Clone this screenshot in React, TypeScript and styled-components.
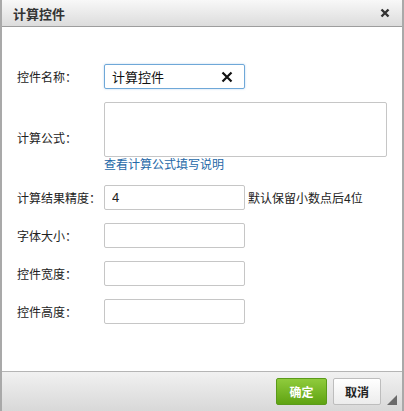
import styled, { createGlobalStyle } from "styled-components";

const GlobalStyle = createGlobalStyle`
  html, body {
    margin: 0;
    padding: 0;
    background: #ffffff;
  }
  body {
    font-family: "Liberation Sans", "Noto Sans CJK SC", sans-serif;
    font-size: 12px;
    color: #222;
  }
`;

const rows = [
  { label: "计算结果精度：", value: "4", hint: "默认保留小数点后4位" },
  { label: "字体大小：", value: "" },
  { label: "控件宽度：", value: "" },
  { label: "控件高度：", value: "" },
];

export default function App() {
  return (
    <>
      <GlobalStyle />
      <Dialog>
        <TitleBar>
          <Title>计算控件</Title>
          <CloseBtn aria-label="close">
            <svg width="10" height="10" viewBox="0 0 10 10">
              <path d="M1.5 1.5 L8.5 8.5 M8.5 1.5 L1.5 8.5" stroke="#333" strokeWidth="2.4" />
            </svg>
          </CloseBtn>
        </TitleBar>
        <Body>
          <Form>
            <Label>控件名称：</Label>
            <NameField>
              <NameText>计算控件</NameText>
              <ClearIcon width="12" height="12" viewBox="0 0 12 12">
                <path d="M1.5 1.5 L10.5 10.5 M10.5 1.5 L1.5 10.5" stroke="#111" strokeWidth="2.2" />
              </ClearIcon>
            </NameField>

            <Label>计算公式：</Label>
            <FormulaCell>
              <Formula />
              <HelpLink href="#">查看计算公式填写说明</HelpLink>
            </FormulaCell>

            {rows.map((r) => (
              <Row key={r.label}>
                <Label>{r.label}</Label>
                <InputCell>
                  <Input defaultValue={r.value} />
                  {r.hint && <Hint>{r.hint}</Hint>}
                </InputCell>
              </Row>
            ))}
          </Form>
        </Body>
        <Footer>
          <Button $primary>确定</Button>
          <Button>取消</Button>
          <Grip />
        </Footer>
      </Dialog>
    </>
  );
}

const Dialog = styled.div`
  position: relative;
  display: flex;
  flex-direction: column;
  height: 411px;
  box-sizing: border-box;
  border-left: 2px solid #a9a9a9;
  border-right: 2px solid #a9a9a9;
  background: #fff;
`;

const TitleBar = styled.div`
  display: flex;
  align-items: center;
  justify-content: space-between;
  height: 26px;
  padding: 0 12px 0 11px;
  background: linear-gradient(#f8f8f8, #dcdcdc);
  border-bottom: 1px solid #9d9d9d;
`;

const Title = styled.span`
  font-size: 13px;
  font-weight: bold;
  color: #333;
`;

const CloseBtn = styled.span`
  display: flex;
  align-items: center;
`;

const Body = styled.div`
  flex: 1;
  padding: 37px 0 0 15px;
`;

const Form = styled.div`
  display: grid;
  grid-template-columns: 87px auto;
  row-gap: 13px;
  align-items: center;
`;

const Row = styled.div`
  display: contents;
`;

const Label = styled.span`
  font-size: 12px;
  color: #222;
`;

const NameField = styled.div`
  display: flex;
  align-items: center;
  justify-content: space-between;
  box-sizing: border-box;
  width: 141px;
  height: 25px;
  padding: 0 11px 0 7px;
  border: 1px solid #6fa8d8;
  border-radius: 2px;
  box-shadow: 0 0 2px rgba(100, 160, 220, 0.5);
`;

const NameText = styled.span`
  font-size: 13px;
  color: #111;
`;

const ClearIcon = styled.svg`
  display: block;
`;

const FormulaCell = styled.div`
  display: flex;
  flex-direction: column;
  align-items: flex-start;
`;

const Formula = styled.textarea`
  box-sizing: border-box;
  width: 283px;
  height: 55px;
  margin: 0;
  border: 1px solid #c6c6c6;
  border-radius: 2px;
  resize: none;
  font: inherit;
`;

const HelpLink = styled.a`
  margin-top: 1px;
  line-height: 14px;
  font-size: 12px;
  color: #2468a8;
  text-decoration: none;
`;

const InputCell = styled.div`
  display: flex;
  align-items: center;
  gap: 3px;
`;

const Input = styled.input`
  box-sizing: border-box;
  width: 141px;
  height: 25px;
  margin: 0;
  padding: 0 7px;
  border: 1px solid #c6c6c6;
  border-radius: 2px;
  font-family: "Liberation Sans", "Noto Sans CJK SC", sans-serif;
  font-size: 13px;
  color: #222;
  outline: none;
`;

const Hint = styled.span`
  font-size: 12px;
  color: #222;
`;

const Footer = styled.div`
  position: relative;
  display: flex;
  align-items: center;
  justify-content: flex-end;
  gap: 6px;
  height: 39px;
  padding-right: 21px;
  border-top: 1px solid #b5b5b5;
  background: linear-gradient(#f1f1f1, #d8d8d8);
`;

const Button = styled.button<{ $primary?: boolean }>`
  height: 27px;
  width: ${(p) => (p.$primary ? "51px" : "48px")};
  padding: 0;
  border-radius: 2px;
  border: 1px solid ${(p) => (p.$primary ? "#5a9a1a" : "#bdbdbd")};
  background: ${(p) =>
    p.$primary
      ? "linear-gradient(#8fcb3c, #5fa312)"
      : "linear-gradient(#ffffff, #ececec)"};
  color: ${(p) => (p.$primary ? "#fff" : "#222")};
  font-family: "Liberation Sans", "Noto Sans CJK SC", sans-serif;
  font-size: 12px;
  font-weight: bold;
`;

const Grip = styled.span`
  position: absolute;
  right: 5px;
  bottom: 6px;
  width: 0;
  height: 0;
  border-left: 10px solid transparent;
  border-bottom: 10px solid #6a6a6a;
`;
